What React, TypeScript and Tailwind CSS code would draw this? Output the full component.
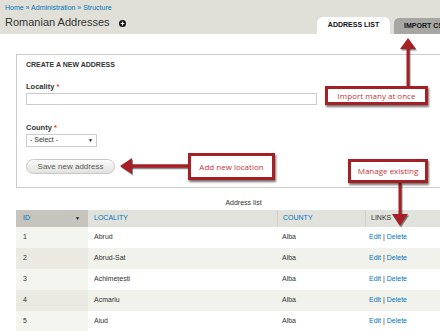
import React from 'react';

const rows = [
  { id: 1, locality: 'Abrud', county: 'Alba' },
  { id: 2, locality: 'Abrud-Sat', county: 'Alba' },
  { id: 3, locality: 'Achimețești', county: 'Alba' },
  { id: 4, locality: 'Acmariu', county: 'Alba' },
  { id: 5, locality: 'Aiud', county: 'Alba' },
];

function Note({ text, className }: { text: string; className: string }) {
  return (
    <div
      className={`absolute flex items-center justify-center bg-white border-[3px] border-[#a51f25] shadow-[1px_2px_2px_rgba(0,0,0,0.55)] text-[8px] leading-none text-[#c8323a] font-['Open_Sans',sans-serif] ${className}`}
    >
      {text}
    </div>
  );
}

function Arrows() {
  const red = '#a51f25';
  const shade = 'rgba(0,0,0,0.45)';
  return (
    <svg className="absolute inset-0 pointer-events-none" width="440" height="331" viewBox="0 0 440 331">
      {/* shadows */}
      <g transform="translate(1,1.5)" fill={shade} stroke={shade}>
        <line x1="408" y1="86" x2="408" y2="47" strokeWidth="3" />
        <polygon points="408,38 400,49 416,49" stroke="none" />
        <line x1="188" y1="166" x2="130" y2="166" strokeWidth="3.5" />
        <polygon points="120,166 132,158 132,174" stroke="none" />
        <line x1="400" y1="183" x2="400" y2="216" strokeWidth="3" />
        <polygon points="400,226 392,214 408,214" stroke="none" />
      </g>
      <g fill={red} stroke={red}>
        <line x1="408" y1="86" x2="408" y2="47" strokeWidth="3" />
        <polygon points="408,38 400,49 416,49" stroke="none" />
        <line x1="188" y1="166" x2="130" y2="166" strokeWidth="3.5" />
        <polygon points="120,166 132,158 132,174" stroke="none" />
        <line x1="400" y1="183" x2="400" y2="216" strokeWidth="3" />
        <polygon points="400,226 392,214 408,214" stroke="none" />
      </g>
    </svg>
  );
}

export default function App() {
  return (
    <div className="relative w-[440px] h-[331px] overflow-hidden bg-white font-['Liberation_Sans',Arial,sans-serif] text-[#333]">
      {/* Header */}
      <div className="h-[34px] bg-[#e0e0d8] flex items-end pl-[5px]">
        <div className="flex flex-col self-stretch">
          <div className="pt-[3px] text-[7px] leading-[9px] text-[#0074bd]">
            Home » Administration » Structure
          </div>
          <div className="flex items-center mt-[4px]">
            <h1 className="text-[11px] leading-[13px] text-[#333]">Romanian Addresses</h1>
            <svg className="ml-[9px] mt-[2px]" width="7" height="7" viewBox="0 0 7 7">
              <circle cx="3.5" cy="3.5" r="3.5" fill="#111" />
              <path d="M3.5 1.6v3.8M1.6 3.5h3.8" stroke="#fff" strokeWidth="1.2" />
            </svg>
          </div>
        </div>
        <div className="ml-auto flex items-end gap-[4px]">
          <div className="w-[73px] h-[17px] bg-white rounded-t-[6px] flex items-center justify-center text-[7px] font-bold text-[#111]">
            ADDRESS LIST
          </div>
          <div className="w-[46px] h-[16px] overflow-hidden bg-[#a6a7a2] rounded-tl-[5px] flex items-center pl-[10px] text-[7px] font-bold text-[#111] whitespace-nowrap">
            IMPORT CSV
          </div>
        </div>
      </div>

      {/* Create form */}
      <div className="pl-[16px] pt-[20px]">
        <div className="w-[440px] h-[134px] border border-[#ccc] pl-[9px] pt-[6px]">
          <div className="text-[7px] leading-[8px] font-bold">CREATE A NEW ADDRESS</div>
          <div className="mt-[13px] text-[7.5px] leading-[9px] font-bold">
            Locality <span className="text-[#e32]">*</span>
          </div>
          <div className="mt-[2px] w-[291px] h-[12px] border border-[#ccc] bg-white" />
          <div className="mt-[18px] text-[7.5px] leading-[9px] font-bold">
            County <span className="text-[#e32]">*</span>
          </div>
          <div className="mt-[2px] w-[71px] h-[13px] border border-[#ccc] bg-white flex items-center justify-between px-[3px] text-[7px]">
            <span>- Select -</span>
            <span className="text-[5px] text-[#111]">▼</span>
          </div>
          <button className="mt-[12px] w-[89px] h-[15px] rounded-full border border-[#c8c8c8] bg-gradient-to-b from-[#fbfbfa] to-[#e2e2df] text-[8px] leading-none text-[#5a5a5a]">
            Save new address
          </button>
        </div>

        {/* Table */}
        <div className="w-[455px]">
          <div className="mt-[10px] text-center text-[7px] leading-[9px]">Address list</div>
          <div className="mt-[3px] text-[7px]">
            <div className="flex h-[17px] items-center">
              <div className="w-[72px] h-full bg-[#c5c5be] flex items-center justify-between pl-[7px] pr-[8px] text-[#0074bd]">
                <span>ID</span>
                <span className="text-[5px] text-[#111]">▼</span>
              </div>
              <div className="w-[189px] h-full bg-[#e1e2dc] flex items-center pl-[6px] text-[#0074bd]">LOCALITY</div>
              <div className="w-[88px] h-full bg-[#e1e2dc] border-l border-[#d0d0ca] flex items-center pl-[5px] text-[#0074bd]">COUNTY</div>
              <div className="w-[106px] h-full bg-[#e1e2dc] border-l border-[#d0d0ca] flex items-center pl-[5px] text-[#333]">LINKS</div>
            </div>
            {rows.map((r, i) => (
              <div key={r.id} className={`flex h-[21px] items-center ${i % 2 ? 'bg-[#f2f2ec]' : 'bg-white'}`}>
                <div className={`w-[72px] h-full flex items-center pl-[7px] ${i % 2 ? 'bg-[#eaeae3]' : 'bg-[#f5f5f0]'}`}>{r.id}</div>
                <div className="w-[189px] pl-[6px]">{r.locality}</div>
                <div className="w-[88px] pl-[5px]">{r.county}</div>
                <div className="w-[106px] pl-[4px]">
                  <span className="text-[#0074bd]">Edit</span> | <span className="text-[#0074bd]">Delete</span>
                </div>
              </div>
            ))}
          </div>
        </div>
      </div>

      {/* Annotations */}
      <Arrows />
      <Note text="Import many at once" className="left-[325px] top-[86px] w-[103px] h-[19px]" />
      <Note text="Add new location" className="left-[188px] top-[153px] w-[87px] h-[27px] border-4" />
      <Note text="Manage existing" className="left-[348px] top-[159px] w-[80px] h-[24px]" />
    </div>
  );
}
